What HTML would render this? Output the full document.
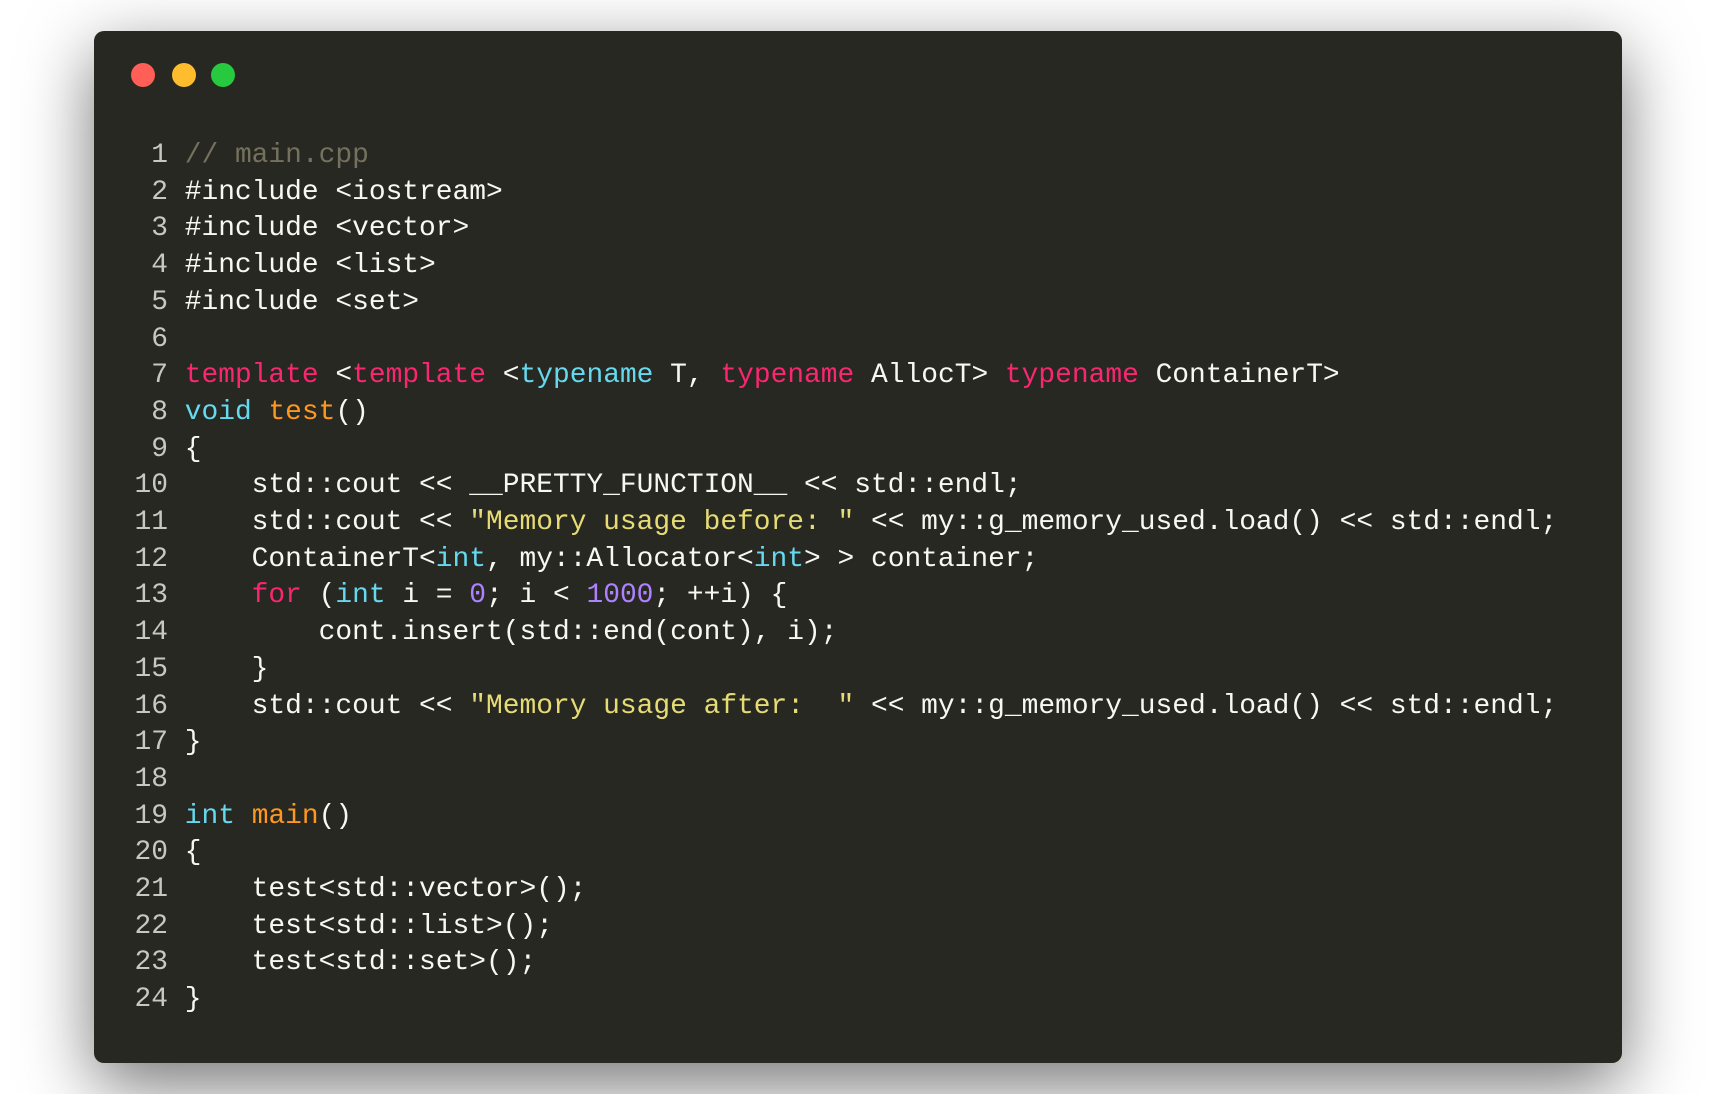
<!DOCTYPE html>
<html><head><meta charset="utf-8"><style>
html,body{margin:0;padding:0;background:#fff;width:1716px;height:1094px;overflow:hidden}
.win{position:absolute;left:94px;top:31px;width:1528px;height:1032px;background:#272822;border-radius:10px;box-shadow:0 22px 70px rgba(0,0,0,.55)}
.dot{position:absolute;top:63px;width:24px;height:24px;border-radius:50%}
pre{position:absolute;left:134.5px;top:138px;margin:0;font-family:"Liberation Mono",monospace;font-size:27.9px;line-height:36.7px;color:#f8f8f2}
.n{color:#c8c8c2}.c{color:#75715e}.k{color:#f92672}.t{color:#66d9ef}.f{color:#fd971f}.s{color:#e6db74}.p{color:#ae81ff}
</style></head><body>
<div class="win"></div>
<div class="dot" style="left:131px;background:#ff5f56"></div>
<div class="dot" style="left:172px;background:#ffbd2e"></div>
<div class="dot" style="left:211px;background:#27c93f"></div>
<pre><span class="n"> 1</span> <span class="c">// main.cpp</span>
<span class="n"> 2</span> #include &lt;iostream&gt;
<span class="n"> 3</span> #include &lt;vector&gt;
<span class="n"> 4</span> #include &lt;list&gt;
<span class="n"> 5</span> #include &lt;set&gt;
<span class="n"> 6</span>
<span class="n"> 7</span> <span class="k">template</span> &lt;<span class="k">template</span> &lt;<span class="t">typename</span> T, <span class="k">typename</span> AllocT&gt; <span class="k">typename</span> ContainerT&gt;
<span class="n"> 8</span> <span class="t">void</span> <span class="f">test</span>()
<span class="n"> 9</span> {
<span class="n">10</span>     std::cout &lt;&lt; __PRETTY_FUNCTION__ &lt;&lt; std::endl;
<span class="n">11</span>     std::cout &lt;&lt; <span class="s">"Memory usage before: "</span> &lt;&lt; my::g_memory_used.load() &lt;&lt; std::endl;
<span class="n">12</span>     ContainerT&lt;<span class="t">int</span>, my::Allocator&lt;<span class="t">int</span>&gt; &gt; container;
<span class="n">13</span>     <span class="k">for</span> (<span class="t">int</span> i = <span class="p">0</span>; i &lt; <span class="p">1000</span>; ++i) {
<span class="n">14</span>         cont.insert(std::end(cont), i);
<span class="n">15</span>     }
<span class="n">16</span>     std::cout &lt;&lt; <span class="s">"Memory usage after:  "</span> &lt;&lt; my::g_memory_used.load() &lt;&lt; std::endl;
<span class="n">17</span> }
<span class="n">18</span>
<span class="n">19</span> <span class="t">int</span> <span class="f">main</span>()
<span class="n">20</span> {
<span class="n">21</span>     test&lt;std::vector&gt;();
<span class="n">22</span>     test&lt;std::list&gt;();
<span class="n">23</span>     test&lt;std::set&gt;();
<span class="n">24</span> }</pre>
</body></html>
